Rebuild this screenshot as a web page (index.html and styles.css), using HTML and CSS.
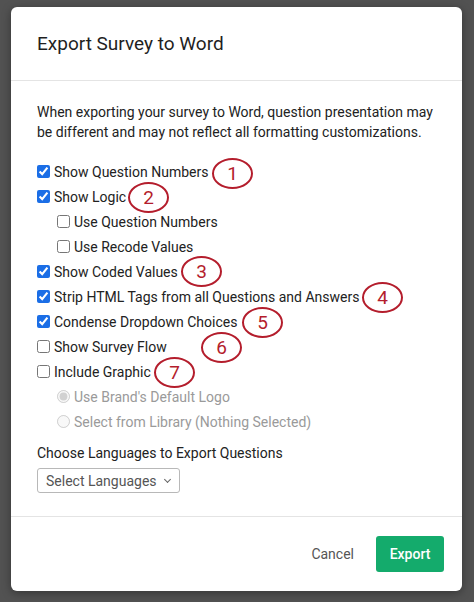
FILE: index.html
```html
<!DOCTYPE html>
<html lang="en">
<head>
  <meta charset="UTF-8">
  <title>Export Survey to Word</title>
  <link rel="stylesheet" href="styles.css">
</head>
<body>
  <div class="backdrop">
    <div class="modal">
      <div class="modal-header">
        <h1>Export Survey to Word</h1>
      </div>

      <div class="modal-body">
        <p class="intro">When exporting your survey to Word, question presentation may be different and may not reflect all formatting customizations.</p>

        <ul class="options">
          <li><label><input type="checkbox" checked> Show Question Numbers</label></li>
          <li><label><input type="checkbox" checked> Show Logic</label></li>
          <li class="sub"><label><input type="checkbox"> Use Question Numbers</label></li>
          <li class="sub"><label><input type="checkbox"> Use Recode Values</label></li>
          <li><label><input type="checkbox" checked> Show Coded Values</label></li>
          <li><label><input type="checkbox" checked> Strip HTML Tags from all Questions and Answers</label></li>
          <li><label><input type="checkbox" checked> Condense Dropdown Choices</label></li>
          <li><label><input type="checkbox"> Show Survey Flow</label></li>
          <li><label><input type="checkbox"> Include Graphic</label></li>
          <li class="sub disabled"><label><input type="radio" name="logo" checked disabled> Use Brand's Default Logo</label></li>
          <li class="sub disabled"><label><input type="radio" name="logo" disabled> Select from Library (Nothing Selected)</label></li>
        </ul>

        <div class="languages">
          <div class="languages-label">Choose Languages to Export Questions</div>
          <button class="select-btn">Select Languages <span class="caret"></span></button>
        </div>
      </div>

      <div class="modal-footer">
        <button class="btn-cancel">Cancel</button>
        <button class="btn-export">Export</button>
      </div>

      <!-- callout markers drawn over the dialog -->
      <span class="callout" style="left: 201px; top: 151px;">1</span>
      <span class="callout" style="left: 117px; top: 175px;">2</span>
      <span class="callout" style="left: 170px; top: 249px;">3</span>
      <span class="callout" style="left: 351px; top: 275px;">4</span>
      <span class="callout" style="left: 231px; top: 300px;">5</span>
      <span class="callout" style="left: 190px; top: 325px;">6</span>
      <span class="callout" style="left: 143px; top: 350px;">7</span>
    </div>
  </div>
</body>
</html>
```

FILE: styles.css
```css
body {
  margin: 0;
  font-family: Roboto, "Liberation Sans", sans-serif;
  background: #525252;
  color: #222;
}

.backdrop {
  height: 602px;
  padding: 7px 12px 0 11px;
  box-sizing: border-box;
}

.modal {
  position: relative;
  width: 451px;
  height: 584px;
  background: #fff;
  border-radius: 6px;
  display: flex;
  flex-direction: column;
  box-shadow: 0 2px 10px rgba(0, 0, 0, 0.35);
}

.modal-header {
  height: 73px;
  padding: 0 26px;
  display: flex;
  align-items: center;
  border-bottom: 1px solid #e4e4e4;
}

.modal-header h1 {
  margin: 0;
  font-size: 19px;
  font-weight: 400;
  color: #1f1f1f;
}

.modal-body {
  flex: 1;
  padding: 22px 26px 0;
  font-size: 14px;
}

.intro {
  margin: 0 0 17px;
  line-height: 19.5px;
  color: #222;
}

.options {
  list-style: none;
  margin: 0;
  padding: 0;
}

.options li {
  height: 25px;
  display: flex;
  align-items: center;
}

.options label {
  display: flex;
  align-items: center;
  gap: 4px;
}

.options input {
  margin: 0;
  width: 13px;
  height: 13px;
  accent-color: #1b6ee6;
}

.options .sub {
  padding-left: 20px;
}

.options .disabled {
  color: #9a9a9a;
}

.languages {
  margin-top: 9px;
}

.languages-label {
  line-height: 20px;
  margin-bottom: 5px;
}

.select-btn {
  height: 25px;
  padding: 0 9px 0 8px;
  font-family: inherit;
  font-size: 14px;
  color: #555;
  background: #fff;
  border: 1px solid #b8b8b8;
  border-radius: 3px;
  display: flex;
  align-items: center;
  gap: 8px;
}

.caret {
  width: 4px;
  height: 4px;
  border-right: 1px solid #666;
  border-bottom: 1px solid #666;
  transform: rotate(45deg);
  margin-top: -3px;
}

.modal-footer {
  height: 74px;
  border-top: 1px solid #e4e4e4;
  display: flex;
  align-items: center;
  justify-content: flex-end;
  padding: 0 18px;
  gap: 22px;
}

.btn-cancel {
  font-family: inherit;
  font-size: 14px;
  color: #555;
  background: none;
  border: none;
  padding: 0;
}

.btn-export {
  width: 68px;
  height: 36px;
  font-family: inherit;
  font-size: 14px;
  font-weight: 500;
  color: #fff;
  background: #14ab6c;
  border: none;
  border-radius: 3px;
}

.callout {
  position: absolute;
  width: 37px;
  height: 27px;
  border: 2.5px solid #b41d2c;
  border-radius: 50%;
  color: #b41d2c;
  font-size: 19px;
  display: flex;
  align-items: center;
  justify-content: center;
}
```
